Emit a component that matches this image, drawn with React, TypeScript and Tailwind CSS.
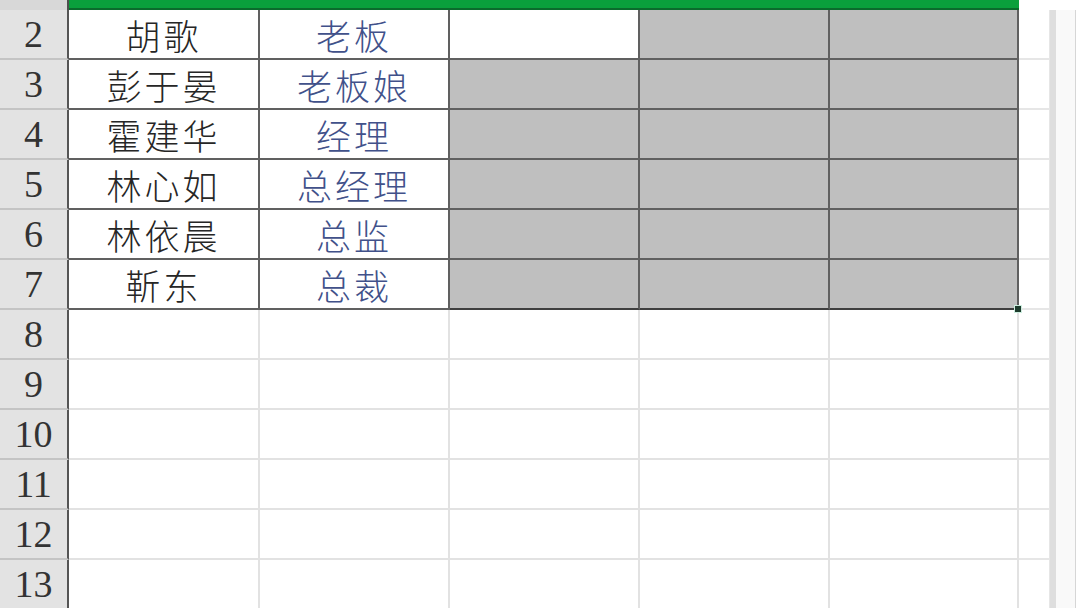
import React from "react";

const widths = [191, 190, 190, 190, 189];
const rows: { n: number; a?: string; b?: string }[] = [
  { n: 2, a: "胡歌", b: "老板" },
  { n: 3, a: "彭于晏", b: "老板娘" },
  { n: 4, a: "霍建华", b: "经理" },
  { n: 5, a: "林心如", b: "总经理" },
  { n: 6, a: "林依晨", b: "总监" },
  { n: 7, a: "靳东", b: "总裁" },
  { n: 8 },
  { n: 9 },
  { n: 10 },
  { n: 11 },
  { n: 12 },
  { n: 13 },
];

const cjk = { fontFamily: '"Noto Sans CJK SC", "Noto Sans", sans-serif' };
const serif = { fontFamily: '"Liberation Serif", "DejaVu Serif", serif' };

function RightStrip() {
  return (
    <>
      <div className="w-[31px] h-full border-b-2 border-r border-[#e6e6e6] bg-white" />
      <div className="w-[6px] h-full bg-[#dedede]" />
      <div className="w-[19px] h-full bg-[#f9f9f9]" />
      <div className="w-[1px] h-full bg-[#d6d6d6]" />
      <div className="flex-1 h-full bg-white" />
    </>
  );
}

export default function App() {
  return (
    <div className="w-[1080px] h-[608px] overflow-hidden bg-white relative">
      <div className="flex h-[10px]">
        <div className="w-[69px] h-full bg-[#d8d8d8] border-r-2 border-[#4f4f4f]" />
        <div className="w-[950px] h-full bg-[#0aa03c] border-b-2 border-[#0b6b2c]" />
        <div className="flex-1 h-full bg-white" />
      </div>
      {rows.map((r) => {
        const data = r.n <= 7;
        const line = data ? "border-[#606060]" : "border-[#e2e2e2]";
        return (
          <div key={r.n} className="flex h-[50px]">
            <div
              className="w-[69px] h-full bg-[#e3e3e3] border-r-2 border-r-[#555555] border-b-2 border-b-[#c4c4c4] flex items-center justify-center text-[38px] text-[#333333] leading-none"
              style={serif}
            >
              {r.n}
            </div>
            {widths.map((w, ci) => {
              const gray = data && ci >= 2 && !(r.n === 2 && ci === 2);
              const bottom = r.n === 7 && ci >= 2 ? "border-b-[#3f3f3f]" : "";
              return (
                <div
                  key={ci}
                  style={{ width: w }}
                  className={`h-full border-r-2 border-b-2 ${line} ${bottom} relative flex items-center justify-center leading-none ${
                    gray ? "bg-[#bfbfbf]" : "bg-white"
                  }`}
                >
                  {ci === 0 && r.a && (
                    <span className="text-[35px] font-light text-[#262626] tracking-[3px]" style={cjk}>
                      {r.a}
                    </span>
                  )}
                  {ci === 1 && r.b && (
                    <span className="text-[35px] font-light text-[#41518a] tracking-[3px]" style={cjk}>
                      {r.b}
                    </span>
                  )}
                  {r.n === 7 && ci === 4 && (
                    <div className="absolute z-10 right-[-5px] bottom-[-5px] w-[8px] h-[8px] bg-[#1d3b2c] border border-[#cdeee0]" />
                  )}
                </div>
              );
            })}
            <RightStrip />
          </div>
        );
      })}
    </div>
  );
}
